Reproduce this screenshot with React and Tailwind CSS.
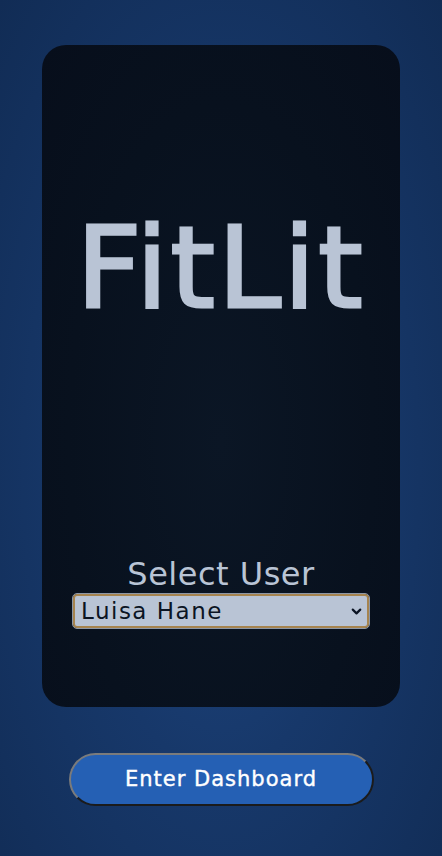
import React, { useState } from 'react';
import { ChevronDown } from 'lucide-react';

const users = ['Luisa Hane', 'Chadrick Bergstrom', 'Tiara Rath', 'Garnett Cruickshank'];

export default function App() {
  const [user, setUser] = useState(users[0]);

  return (
    <div
      className="min-h-screen w-full flex flex-col items-center pt-[45px] bg-[radial-gradient(ellipse_at_50%_55%,#1e4680_0%,#17386a_45%,#112c55_100%)]"
      style={{ fontFamily: '"DejaVu Sans", "Noto Sans", sans-serif' }}
    >
      <div className="w-[358px] h-[662px] rounded-[24px] bg-[radial-gradient(ellipse_at_50%_60%,#0b1625_0%,#08111e_60%,#070e1b_100%)] flex flex-col items-center">
        <h1 className="mt-[163px] text-[113px] leading-[120px] tracking-[3px] text-[#b9c4d5] [-webkit-text-stroke:3px_#b9c4d5] [paint-order:stroke_fill]">
          FitLit
        </h1>

        <label htmlFor="user" className="mt-[228px] text-[32px] leading-[36px] tracking-[0.5px] text-[#b9c4d5]">
          Select User
        </label>
        <div className="relative w-[296px] mt-[2px]">
          <select
            id="user"
            value={user}
            onChange={(e) => setUser(e.target.value)}
            className="appearance-none w-full h-[34px] pl-[6px] pr-6 rounded-[4px] bg-[#b9c4d5] border-2 border-[#a6844f] outline outline-1 outline-[#8d97a6] text-[23px] leading-[28px] tracking-[1.5px] text-[#0b1423]"
            style={{ fontFamily: 'inherit' }}
          >
            {users.map((u) => (
              <option key={u}>{u}</option>
            ))}
          </select>
          <ChevronDown
            size={15}
            strokeWidth={3.5}
            className="absolute right-[5px] top-[10px] text-[#0b1423] pointer-events-none"
          />
        </div>
      </div>

      <button className="mt-[46px] w-[305px] h-[53px] rounded-full bg-[#2560b4] border-2 border-t-[#7b7b7b] border-l-[#7b7b7b] border-r-[#1b1b1b] border-b-[#1b1b1b] text-white text-[21px] tracking-[1px] [-webkit-text-stroke:0.4px_white]">
        Enter Dashboard
      </button>
    </div>
  );
}
